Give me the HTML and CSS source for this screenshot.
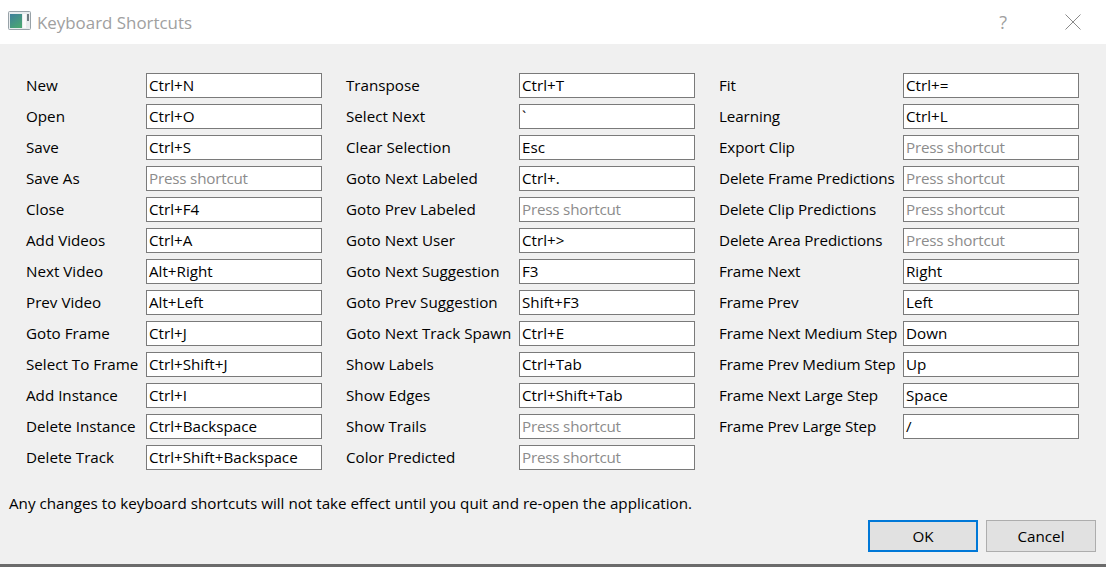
FILE: index.html
```html
<!DOCTYPE html>
<html lang="en">
<head>
<meta charset="UTF-8">
<title>Keyboard Shortcuts</title>
<link rel="stylesheet" href="styles.css">
</head>
<body>
<div class="dialog">
    <div class="titlebar">
        <svg class="app-icon" width="24" height="20" viewBox="0 0 24 20">
            <defs>
                <linearGradient id="iconFill" x1="0" y1="0" x2="0.6" y2="1">
                    <stop offset="0" stop-color="#3f7f9c"/>
                    <stop offset="1" stop-color="#4aa574"/>
                </linearGradient>
            </defs>
            <rect x="0.5" y="0.5" width="22" height="18" rx="1" fill="#e8ecee" stroke="#98a2a8"/>
            <rect x="2" y="3" width="12" height="14" fill="url(#iconFill)"/>
            <rect x="15" y="3" width="3" height="14" fill="#fafafa"/>
            <rect x="19" y="3" width="2" height="7" fill="#6f7a80"/>
        </svg>
        <span class="title">Keyboard Shortcuts</span>
        <span class="help">?</span>
        <svg class="close" width="16" height="16" viewBox="0 0 16 16">
            <path d="M0.5 0.5L15.5 15.5M15.5 0.5L0.5 15.5" stroke="#8a8a8a" stroke-width="1" fill="none"/>
        </svg>
    </div>
    <div class="content">
        <div class="columns">
            <div class="column col-a">
                <label>New</label><div class="key">Ctrl+N</div>
                <label>Open</label><div class="key">Ctrl+O</div>
                <label>Save</label><div class="key">Ctrl+S</div>
                <label>Save As</label><div class="key empty">Press shortcut</div>
                <label>Close</label><div class="key">Ctrl+F4</div>
                <label>Add Videos</label><div class="key">Ctrl+A</div>
                <label>Next Video</label><div class="key">Alt+Right</div>
                <label>Prev Video</label><div class="key">Alt+Left</div>
                <label>Goto Frame</label><div class="key">Ctrl+J</div>
                <label>Select To Frame</label><div class="key">Ctrl+Shift+J</div>
                <label>Add Instance</label><div class="key">Ctrl+I</div>
                <label>Delete Instance</label><div class="key">Ctrl+Backspace</div>
                <label>Delete Track</label><div class="key">Ctrl+Shift+Backspace</div>
            </div>
            <div class="column col-b">
                <label>Transpose</label><div class="key">Ctrl+T</div>
                <label>Select Next</label><div class="key">`</div>
                <label>Clear Selection</label><div class="key">Esc</div>
                <label>Goto Next Labeled</label><div class="key">Ctrl+.</div>
                <label>Goto Prev Labeled</label><div class="key empty">Press shortcut</div>
                <label>Goto Next User</label><div class="key">Ctrl+&gt;</div>
                <label>Goto Next Suggestion</label><div class="key">F3</div>
                <label>Goto Prev Suggestion</label><div class="key">Shift+F3</div>
                <label>Goto Next Track Spawn</label><div class="key">Ctrl+E</div>
                <label>Show Labels</label><div class="key">Ctrl+Tab</div>
                <label>Show Edges</label><div class="key">Ctrl+Shift+Tab</div>
                <label>Show Trails</label><div class="key empty">Press shortcut</div>
                <label>Color Predicted</label><div class="key empty">Press shortcut</div>
            </div>
            <div class="column col-c">
                <label>Fit</label><div class="key">Ctrl+=</div>
                <label>Learning</label><div class="key">Ctrl+L</div>
                <label>Export Clip</label><div class="key empty">Press shortcut</div>
                <label>Delete Frame Predictions</label><div class="key empty">Press shortcut</div>
                <label>Delete Clip Predictions</label><div class="key empty">Press shortcut</div>
                <label>Delete Area Predictions</label><div class="key empty">Press shortcut</div>
                <label>Frame Next</label><div class="key">Right</div>
                <label>Frame Prev</label><div class="key">Left</div>
                <label>Frame Next Medium Step</label><div class="key">Down</div>
                <label>Frame Prev Medium Step</label><div class="key">Up</div>
                <label>Frame Next Large Step</label><div class="key">Space</div>
                <label>Frame Prev Large Step</label><div class="key">/</div>
            </div>
        </div>
        <p class="note">Any changes to keyboard shortcuts will not take effect until you quit and re-open the application.</p>
        <div class="buttons">
            <button class="default">OK</button>
            <button>Cancel</button>
        </div>
    </div>
</div>
</body>
</html>
```

FILE: styles.css
```css
html, body {
    margin: 0;
    padding: 0;
}

body {
    width: 1106px;
    height: 567px;
    overflow: hidden;
    font-family: "Open Sans", "Noto Sans", sans-serif;
    font-size: 15.2px;
    color: #000;
}

.dialog {
    height: 564px;
    display: flex;
    flex-direction: column;
    background-color: #f0f0f0;
    border-bottom: 3px solid #6b6b6b;
}

.titlebar {
    height: 44px;
    flex: none;
    display: flex;
    align-items: center;
    background-color: #fff;
    padding-left: 8px;
}

.app-icon {
    margin-right: 5px;
    margin-top: -2px;
}

.title {
    color: #a0a0a0;
    font-size: 16.9px;
}

.help {
    margin-left: auto;
    color: #a0a0a0;
    font-size: 18px;
    margin-right: 58px;
}

.close {
    margin-right: 25px;
}

.content {
    flex: 1;
    display: flex;
    flex-direction: column;
    padding: 29px 10px 0 9px;
}

.columns {
    display: flex;
    padding-left: 17px;
}

.column {
    display: grid;
    grid-auto-rows: 25px;
    row-gap: 6px;
    align-items: center;
}

.col-a {
    grid-template-columns: 120px 176px;
    margin-right: 24px;
}

.col-b {
    grid-template-columns: 173px 176px;
    margin-right: 24px;
}

.col-c {
    grid-template-columns: 184px 176px;
}

label {
    white-space: nowrap;
    padding-bottom: 2px;
}

.col-c label {
    letter-spacing: -0.1px;
}

.key {
    height: 25px;
    box-sizing: border-box;
    border: 1px solid #7a7a7a;
    background-color: #fff;
    padding-left: 2px;
    line-height: 23px;
    white-space: nowrap;
    overflow: hidden;
}

.key.empty {
    color: #8c8c8c;
    letter-spacing: -0.2px;
}

.note {
    margin: 23px 0 0;
    line-height: 20px;
}

.buttons {
    display: flex;
    justify-content: flex-end;
    gap: 8px;
    margin-top: 7px;
}

button {
    width: 110px;
    height: 32px;
    box-sizing: border-box;
    background-color: #e1e1e1;
    border: 1px solid #adadad;
    font-family: inherit;
    font-size: 15.2px;
    color: #000;
    padding: 0;
}

button.default {
    border: 2px solid #0078d7;
}
```
